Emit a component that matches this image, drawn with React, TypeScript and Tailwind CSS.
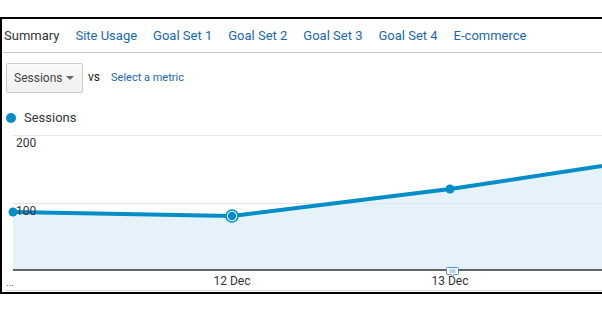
import React from "react";

const BLUE = "#058dc7";

function Chart() {
  return (
    <svg width={600} height={165} className="block" style={{ fontFamily: "Roboto, Arial, sans-serif" }}>
      <line x1={11} y1={8.5} x2={600} y2={8.5} stroke="#e6e6e6" strokeWidth={1} />
      <polygon points="11,85 230,89 448,62 600,39 600,143 11,143" fill="#e5f2f9" />
      <line x1={11} y1={76.5} x2={600} y2={76.5} stroke="#dde6eb" strokeWidth={1} />
      <polyline points="11,85 230,89 448,62 600,39" fill="none" stroke={BLUE} strokeWidth={4} strokeLinejoin="round" />
      <line x1={11} y1={143} x2={600} y2={143} stroke="#333" strokeWidth={1.5} />
      <circle cx={11} cy={85} r={4.5} fill={BLUE} />
      <circle cx={230} cy={89} r={6} fill="white" stroke={BLUE} strokeWidth={1.6} />
      <circle cx={230} cy={89} r={4.2} fill={BLUE} />
      <circle cx={448} cy={62} r={4.5} fill={BLUE} />
      <text x={14} y={20} fontSize={12} fill="#333">200</text>
      <text x={14} y={88} fontSize={12} fill="#333">100</text>
      <text x={230} y={158} fontSize={12} fill="#333" textAnchor="middle">12 Dec</text>
      <text x={448} y={158} fontSize={12} fill="#333" textAnchor="middle">13 Dec</text>
      <text x={4} y={159} fontSize={10} fill="#555">...</text>
      <g>
        <path d="M445.5 140.5 h10 a1 1 0 0 1 1 1 v5 a1 1 0 0 1 -1 1 h-3.5 l-1.5 2 l-1.5 -2 h-3.5 a1 1 0 0 1 -1 -1 v-5 a1 1 0 0 1 1 -1 z" fill="white" stroke="#4f8fd0" strokeWidth={1} />
        <line x1={447.5} y1={143} x2={453.5} y2={143} stroke="#4f8fd0" strokeWidth={0.8} />
        <line x1={447.5} y1={145} x2={453.5} y2={145} stroke="#4f8fd0" strokeWidth={0.8} />
      </g>
      <line x1={4} y1={163.5} x2={600} y2={163.5} stroke="#dcdcdc" strokeWidth={1} />
    </svg>
  );
}

export default function App() {
  const tabs = ["Site Usage", "Goal Set 1", "Goal Set 2", "Goal Set 3", "Goal Set 4", "E-commerce"];
  return (
    <div className="w-[602px] h-[314px] bg-white overflow-hidden pt-[17px]" style={{ fontFamily: "Roboto, Arial, sans-serif" }}>
      <div className="h-[277px] border-t-2 border-l-2 border-b-2 border-black flex flex-col">
        <div className="h-[34px] border-b border-[#cccccc] flex items-center pl-[2px] gap-[16px] text-[13px]">
          <span className="text-[#333333]">Summary</span>
          {tabs.map((t) => (
            <span key={t} className="text-[#1a66b0]">{t}</span>
          ))}
        </div>
        <div className="mt-[10px] h-[30px] flex items-center pl-[4px]">
          <div className="w-[77px] h-[30px] border border-[#cccccc] rounded-[2px] bg-gradient-to-b from-[#f9f9f9] to-[#f0f0f0] flex items-center pl-[7px] pr-[8px] justify-between">
            <span className="text-[12px] text-[#444444]">Sessions</span>
            <svg width={8} height={4} viewBox="0 0 8 4"><path d="M0 0 L8 0 L4 4 Z" fill="#666" /></svg>
          </div>
          <span className="ml-[5px] text-[12px] text-[#222222] -mt-[2px]">vs</span>
          <span className="ml-[11px] text-[11px] text-[#1a66b0]">Select a metric</span>
        </div>
        <div className="mt-[16px] h-[18px] flex items-center pl-[4px]">
          <span className="w-[10px] h-[10px] rounded-full bg-[#058dc7]" />
          <span className="ml-[8px] text-[13px] text-[#333333]">Sessions</span>
        </div>
        <Chart />
      </div>
    </div>
  );
}
